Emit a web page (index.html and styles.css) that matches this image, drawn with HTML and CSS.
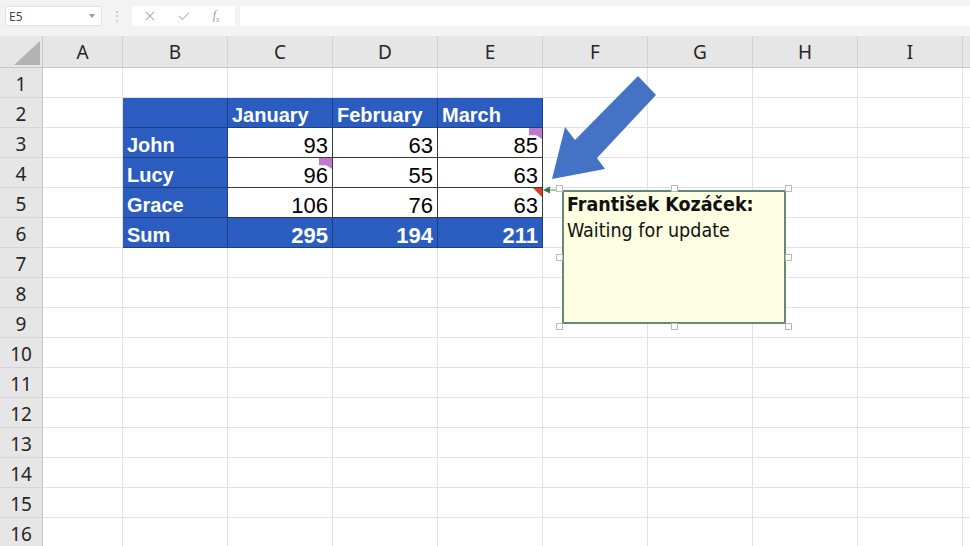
FILE: index.html
```html
<!DOCTYPE html>
<html>
<head>
<meta charset="utf-8">
<link rel="stylesheet" href="styles.css">
</head>
<body>
<div class="app">
  <div class="fbar">
    <div class="namebox"><span>E5</span><svg class="caret" width="6" height="4" viewBox="0 0 6 4"><path d="M0 0 L6 0 L3 4 Z" fill="#9a9a9a"/></svg></div>
    <div class="dots">⋮</div>
    <div class="fbtns">
      <svg width="10" height="10" viewBox="0 0 10 10"><path d="M1 1 L9 9 M9 1 L1 9" stroke="#b5b5b5" stroke-width="1.1"/></svg>
      <svg width="12" height="10" viewBox="0 0 12 10"><path d="M1 5 L4.5 8.5 L11 1.5" stroke="#b5b5b5" stroke-width="1.1" fill="none"/></svg>
      <span class="fx">f<sub>x</sub></span>
    </div>
    <div class="finput"></div>
  </div>

  <div class="sheet">
    <div class="corner"><span class="tri"></span></div>
    <div class="ch">A</div><div class="ch">B</div><div class="ch">C</div><div class="ch">D</div><div class="ch">E</div><div class="ch">F</div><div class="ch">G</div><div class="ch">H</div><div class="ch">I</div><div class="ch"></div>

    <div class="rh">1</div><div class="c"></div><div class="c"></div><div class="c"></div><div class="c"></div><div class="c"></div><div class="c"></div><div class="c"></div><div class="c"></div><div class="c"></div><div class="c"></div>

    <div class="rh">2</div><div class="c"></div><div class="t"></div><div class="t">January</div><div class="t">February</div><div class="t">March</div><div class="c"></div><div class="c"></div><div class="c"></div><div class="c"></div><div class="c"></div>

    <div class="rh">3</div><div class="c"></div><div class="t">John</div><div class="t w">93</div><div class="t w">63</div><div class="t w">85<span class="mark purple"></span></div><div class="c"></div><div class="c"></div><div class="c"></div><div class="c"></div><div class="c"></div>

    <div class="rh">4</div><div class="c"></div><div class="t">Lucy</div><div class="t w">96<span class="mark purple"></span></div><div class="t w">55</div><div class="t w">63</div><div class="c"></div><div class="c"></div><div class="c"></div><div class="c"></div><div class="c"></div>

    <div class="rh">5</div><div class="c"></div><div class="t">Grace</div><div class="t w">106</div><div class="t w">76</div><div class="t w">63<span class="mark red"></span></div><div class="c"></div><div class="c"></div><div class="c"></div><div class="c"></div><div class="c"></div>

    <div class="rh">6</div><div class="c"></div><div class="t">Sum</div><div class="t n">295</div><div class="t n">194</div><div class="t n">211</div><div class="c"></div><div class="c"></div><div class="c"></div><div class="c"></div><div class="c"></div>

    <div class="rh">7</div><div class="c"></div><div class="c"></div><div class="c"></div><div class="c"></div><div class="c"></div><div class="c"></div><div class="c"></div><div class="c"></div><div class="c"></div><div class="c"></div>
    <div class="rh">8</div><div class="c"></div><div class="c"></div><div class="c"></div><div class="c"></div><div class="c"></div><div class="c"></div><div class="c"></div><div class="c"></div><div class="c"></div><div class="c"></div>
    <div class="rh">9</div><div class="c"></div><div class="c"></div><div class="c"></div><div class="c"></div><div class="c"></div><div class="c"></div><div class="c"></div><div class="c"></div><div class="c"></div><div class="c"></div>
    <div class="rh">10</div><div class="c"></div><div class="c"></div><div class="c"></div><div class="c"></div><div class="c"></div><div class="c"></div><div class="c"></div><div class="c"></div><div class="c"></div><div class="c"></div>
    <div class="rh">11</div><div class="c"></div><div class="c"></div><div class="c"></div><div class="c"></div><div class="c"></div><div class="c"></div><div class="c"></div><div class="c"></div><div class="c"></div><div class="c"></div>
    <div class="rh">12</div><div class="c"></div><div class="c"></div><div class="c"></div><div class="c"></div><div class="c"></div><div class="c"></div><div class="c"></div><div class="c"></div><div class="c"></div><div class="c"></div>
    <div class="rh">13</div><div class="c"></div><div class="c"></div><div class="c"></div><div class="c"></div><div class="c"></div><div class="c"></div><div class="c"></div><div class="c"></div><div class="c"></div><div class="c"></div>
    <div class="rh">14</div><div class="c"></div><div class="c"></div><div class="c"></div><div class="c"></div><div class="c"></div><div class="c"></div><div class="c"></div><div class="c"></div><div class="c"></div><div class="c"></div>
    <div class="rh">15</div><div class="c"></div><div class="c"></div><div class="c"></div><div class="c"></div><div class="c"></div><div class="c"></div><div class="c"></div><div class="c"></div><div class="c"></div><div class="c"></div>
    <div class="rh">16</div><div class="c"></div><div class="c"></div><div class="c"></div><div class="c"></div><div class="c"></div><div class="c"></div><div class="c"></div><div class="c"></div><div class="c"></div><div class="c"></div>
  </div>

  <svg class="overlay" width="970" height="546" viewBox="0 0 970 546">
    <polygon points="552,179 565,127 575,140 638,76 656,95 597,158 605,169" fill="#4472c4"/>
    <line x1="549" y1="190" x2="563" y2="190" stroke="#5f8570" stroke-width="1"/>
    <polygon points="543,190 550,186.5 550,193.5" fill="#2e7a50"/>
  </svg>

  <div class="note">
    <div class="note-text"><b>František Kozáček:</b><br>Waiting for update</div>
    <span class="h h-tl"></span><span class="h h-tm"></span><span class="h h-tr"></span>
    <span class="h h-ml"></span><span class="h h-mr"></span>
    <span class="h h-bl"></span><span class="h h-bm"></span><span class="h h-br"></span>
  </div>
</div>
</body>
</html>
```

FILE: styles.css
```css
* { box-sizing: border-box; }
html, body { margin: 0; padding: 0; background: #fff; }
body { font-family: "Noto Sans", "Open Sans", sans-serif; overflow: hidden; }

.app { position: relative; width: 970px; height: 546px; overflow: hidden; }

/* formula bar */
.fbar {
  height: 36px;
  background: #f3f3f3;
  display: flex;
  align-items: flex-start;
  padding-top: 6px;
}
.namebox {
  margin-left: 5px;
  width: 97px;
  height: 20px;
  background: #fff;
  border: 1px solid #e2e2e2;
  display: flex;
  align-items: center;
  justify-content: space-between;
  padding: 0 6px 0 3px;
  font-size: 12px;
  color: #444;
}
.dots {
  width: 30px;
  text-align: center;
  color: #c4c4c4;
  font-size: 14px;
  line-height: 20px;
}
.fbtns {
  width: 103px;
  height: 20px;
  background: #fff;
  display: flex;
  align-items: center;
  justify-content: space-around;
  padding: 0 4px 0 2px;
}
.fx {
  font-family: "Liberation Serif", serif;
  font-style: italic;
  font-size: 12px;
  color: #9a9a9a;
}
.fx sub { font-size: 8px; }
.finput {
  flex: 1;
  margin-left: 5px;
  height: 20px;
  background: #fff;
}

/* sheet */
.sheet {
  display: grid;
  grid-template-columns: 43px 80px repeat(9, 105px);
  grid-template-rows: 32px repeat(16, 30px);
}
.corner {
  position: relative;
  background: #e6e6e6;
  border-right: 1px solid #c6c6c6;
  border-bottom: 1px solid #c6c6c6;
}
.tri {
  position: absolute;
  right: 2px;
  bottom: 2px;
  width: 26px;
  height: 24px;
  background: #b3b3b3;
  clip-path: polygon(100% 0, 100% 100%, 0 100%);
}
.ch, .rh {
  background: #e6e6e6;
  display: flex;
  align-items: center;
  justify-content: center;
  color: #262626;
  font-size: 19px;
}
.ch {
  border-right: 1px solid #d2d2d2;
  border-bottom: 1px solid #c6c6c6;
  padding-top: 1px;
}
.rh {
  border-right: 1px solid #c6c6c6;
  border-bottom: 1px solid #d6d6d6;
  padding-top: 2px;
}
.c {
  border-right: 1px solid #e2e2e2;
  border-bottom: 1px solid #e2e2e2;
}

/* table */
.t {
  position: relative;
  background: #2b5dc0;
  color: #fff;
  font-family: "Liberation Sans", Arial, sans-serif;
  font-weight: bold;
  font-size: 20px;
  border-right: 1px solid #1b3f86;
  border-bottom: 1px solid #1b3f86;
  display: flex;
  align-items: center;
  padding: 6px 4px 0 4px;
}
.t.w {
  background: #fff;
  color: #000;
  font-weight: normal;
  font-size: 22px;
  justify-content: flex-end;
  border-right-color: #3a3a3a;
  border-bottom-color: #3a3a3a;
}
.t.n {
  font-size: 22px;
  justify-content: flex-end;
}
.mark {
  position: absolute;
  top: 0;
  right: 0;
}
.mark.purple {
  width: 13px;
  height: 11px;
  background: #bf78cf;
  clip-path: polygon(0 0, 100% 0, 100% 100%, 55% 65%, 0 65%);
}
.mark.red {
  width: 9px;
  height: 9px;
  background: #e23b1c;
  clip-path: polygon(0 0, 100% 0, 100% 100%);
}

/* overlays */
.overlay {
  position: absolute;
  left: 0;
  top: 0;
  pointer-events: none;
}
.note {
  position: absolute;
  left: 562px;
  top: 190px;
  width: 224px;
  height: 134px;
  background: #fefee2;
  border: 2px solid #648a75;
}
.note-text {
  padding: 0 0 0 3px;
  font-family: "DejaVu Sans Condensed", "DejaVu Sans", sans-serif;
  font-size: 19.5px;
  line-height: 26px;
  color: #111;
}
.note-text b { font-weight: bold; }
.h {
  position: absolute;
  width: 7px;
  height: 7px;
  background: #fff;
  border: 1px solid #b9b9b9;
}
.h-tl { left: -8px; top: -7px; }
.h-tm { left: 107px; top: -7px; }
.h-tr { right: -8px; top: -7px; }
.h-ml { left: -8px; top: 62px; }
.h-mr { right: -8px; top: 62px; }
.h-bl { left: -8px; bottom: -8px; }
.h-bm { left: 107px; bottom: -8px; }
.h-br { right: -8px; bottom: -8px; }
```
